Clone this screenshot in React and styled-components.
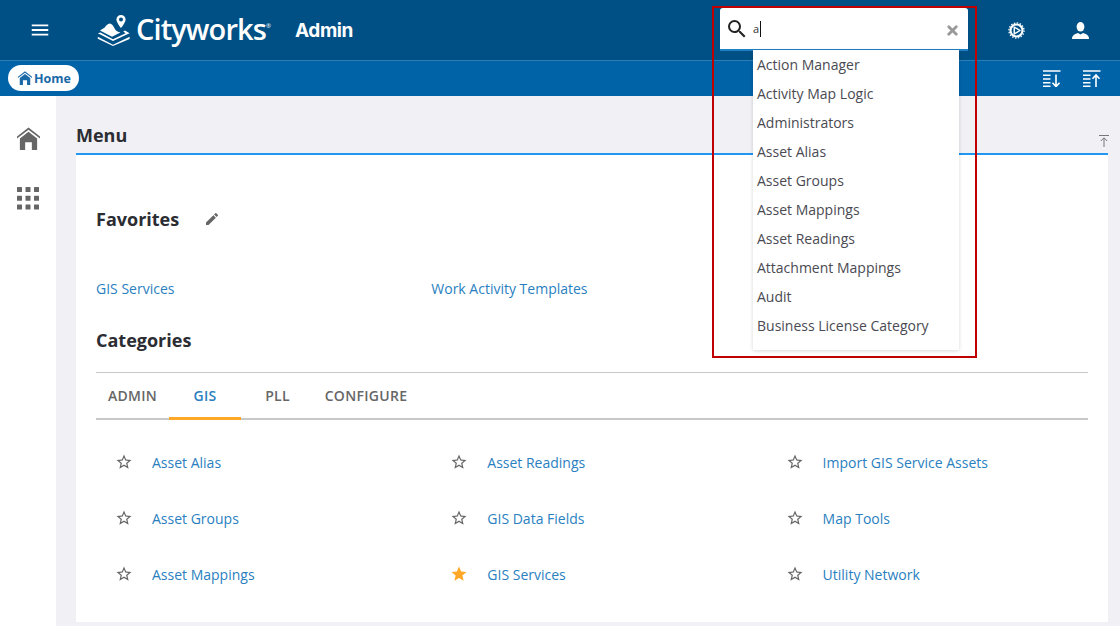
import React from 'react';
import styled, { createGlobalStyle } from 'styled-components';
import { X } from 'lucide-react';
import { MdEdit, MdStar, MdStarBorder, MdMenu, MdSearch } from 'react-icons/md';

const GlobalStyle = createGlobalStyle`
  html, body { margin: 0; padding: 0; height: 100%; overflow: hidden; }
  body { font-family: "Open Sans", "Liberation Sans", sans-serif; background: #f0f0f5; }
  * { box-sizing: border-box; }
`;

const Page = styled.div`
  position: relative;
  width: 1120px;
  height: 626px;
  overflow: hidden;
  display: flex;
  flex-direction: column;
`;

const TopBar = styled.header`
  height: 61px;
  flex: none;
  display: flex;
  align-items: center;
  padding-right: 8px;
  background: #005085;
  border-bottom: 1px solid #2b7db5;
  color: #fff;
`;

const MenuButton = styled.div`
  width: 80px;
  display: flex;
  justify-content: center;
  color: #fff;
`;

const Logo = styled.div`
  display: flex;
  align-items: center;
  margin-left: 17px;
`;

const LogoText = styled.span`
  font-family: "Open Sans", "Liberation Sans", sans-serif;
  font-size: 29px;
  font-weight: 600;
  letter-spacing: -0.9px;
  margin: -3px 0 0 6px;
  line-height: 40px;
`;

const Trademark = styled.sup`
  font-size: 6px;
  align-self: flex-start;
  margin-top: 10px;
`;

const AppName = styled.span`
  font-family: Inter, "Open Sans", sans-serif;
  font-size: 19px;
  font-weight: 700;
  margin-left: 24px;
  letter-spacing: -0.4px;
`;

const SearchWrap = styled.div`
  position: relative;
  width: 248px;
  height: 43px;
  align-self: flex-start;
  margin-top: 8px;
  margin-left: auto;
  margin-right: 16px;
  display: flex;
  align-items: center;
  background: #fff;
  border-radius: 3px 3px 0 0;
  border-bottom: 2px solid #1f7fc4;
  color: #222;
`;

const SearchIcon = styled(MdSearch)`
  margin-left: 5px;
  flex: none;
`;

const SearchValue = styled.span`
  font-size: 11px;
  line-height: 16px;
  margin-left: 4px;
  color: #333;
  border-right: 1px solid #111;
  padding-right: 1px;
`;

const ClearIcon = styled(X)`
  position: absolute;
  right: 8px;
  top: 15px;
  color: #999;
`;

const Dropdown = styled.ul`
  position: absolute;
  z-index: 5;
  top: 42px;
  left: 33px;
  width: 206px;
  height: 300px;
  margin: 0;
  padding: 0;
  list-style: none;
  background: #fff;
  box-shadow: 0 1px 4px rgba(0, 0, 0, 0.16);
`;

const DropdownItem = styled.li`
  height: 29px;
  padding-left: 4px;
  font-size: 14px;
  line-height: 29px;
  color: #4a4a52;
`;

const HeaderIcon = styled.div`
  width: 64px;
  display: flex;
  justify-content: center;
  color: #fff;
`;

const SubBar = styled.div`
  height: 35px;
  flex: none;
  display: flex;
  align-items: center;
  padding: 0 19px 0 8px;
  background: #0063a8;
  color: #fff;
`;

const HomePill = styled.div`
  display: flex;
  align-items: center;
  gap: 2px;
  height: 26px;
  padding: 0 8px 0 10px;
  border-radius: 13px;
  background: #fff;
  color: #1a6aa8;
  font-size: 12.5px;
  font-weight: 700;
  margin-top: -1px;
`;

const SubActions = styled.div`
  margin-left: auto;
  display: flex;
  gap: 22px;
`;

const Body = styled.div`
  flex: 1;
  display: flex;
  min-height: 0;
`;

const SideRail = styled.nav`
  width: 56px;
  flex: none;
  background: #fff;
  display: flex;
  flex-direction: column;
  align-items: center;
  padding-top: 31px;
  gap: 37px;
  color: #666;
`;

const Main = styled.main`
  flex: 1;
  padding: 0 12px 4px 20px;
  display: flex;
  flex-direction: column;
  min-width: 0;
`;

const MenuHead = styled.div`
  position: relative;
  height: 59px;
  flex: none;
  display: flex;
  align-items: center;
  padding-top: 21px;
  border-bottom: 2px solid #2196f3;
  font-size: 18px;
  font-weight: 700;
  color: #2b2d33;
`;

const CollapseIcon = styled.svg`
  position: absolute;
  right: -1px;
  bottom: 6px;
`;

const Card = styled.section`
  flex: 1;
  background: #fff;
  padding: 50px 20px 0;
  min-height: 0;
`;

const SectionTitle = styled.h2`
  display: flex;
  align-items: center;
  margin: 0;
  height: 28px;
  font-size: 18px;
  font-weight: 700;
  color: #2b2d33;
`;

const EditIcon = styled(MdEdit)`
  margin-left: 25px;
  color: #666;
`;

const FavoriteRow = styled.div`
  display: grid;
  grid-template-columns: repeat(3, 335.3px);
  margin-top: 44px;
  height: 24px;
  align-items: center;
`;

const LinkText = styled.a`
  font-size: 14px;
  line-height: 20px;
  color: #2a7fc0;
`;

const CategoriesTitle = styled(SectionTitle)`
  margin-top: 25px;
`;

const Tabs = styled.div`
  display: flex;
  margin-top: 18px;
  height: 48px;
  border-top: 1px solid #c8c8c8;
  border-bottom: 2px solid #c8c8c8;
`;

const Tab = styled.div`
  width: ${(p) => p.$width}px;
  height: 47px;
  display: flex;
  align-items: center;
  justify-content: center;
  font-size: 14px;
  font-weight: 600;
  letter-spacing: 0.3px;
  color: ${(p) => (p.$active ? '#2a7fc0' : '#666')};
  border-bottom: ${(p) => (p.$active ? '3px solid #ffa726' : '3px solid transparent')};
  padding-top: 1px;
`;

const LinkGrid = styled.div`
  display: grid;
  grid-template-columns: repeat(3, 335.3px);
  grid-auto-rows: 56px;
  padding-top: 15px;
`;

const LinkCell = styled.div`
  display: flex;
  align-items: center;
  padding-left: 19px;
`;

const StarSlot = styled.span`
  width: 37px;
  flex: none;
  display: flex;
  margin-top: -2px;
  color: ${(p) => (p.$on ? '#ffa726' : '#666')};
`;

const Highlight = styled.div`
  position: absolute;
  z-index: 10;
  left: 712px;
  top: 6px;
  width: 265px;
  height: 352px;
  border: 2px solid #c00000;
  pointer-events: none;
`;

const suggestions = [
  'Action Manager',
  'Activity Map Logic',
  'Administrators',
  'Asset Alias',
  'Asset Groups',
  'Asset Mappings',
  'Asset Readings',
  'Attachment Mappings',
  'Audit',
  'Business License Category',
];

const tabs = [
  { label: 'ADMIN', width: 73 },
  { label: 'GIS', width: 72, active: true },
  { label: 'PLL', width: 73 },
  { label: 'CONFIGURE', width: 104 },
];

const links = [
  { label: 'Asset Alias' },
  { label: 'Asset Readings' },
  { label: 'Import GIS Service Assets' },
  { label: 'Asset Groups' },
  { label: 'GIS Data Fields' },
  { label: 'Map Tools' },
  { label: 'Asset Mappings' },
  { label: 'GIS Services', favorite: true },
  { label: 'Utility Network' },
];

function CityworksMark() {
  return (
    <svg width="33" height="31" viewBox="0 0 33 31" fill="#fff">
      <path fillRule="evenodd" d="M24 0a4.600 4.600 0 0 0-4.600 4.600c0 3 4.600 8.600 4.600 8.600s4.600-5.600 4.600-8.600A4.600 4.600 0 0 0 24 0zm0 2.600a2 2 0 1 1 0 4 2 2 0 0 1 0-4z" />
      <path d="M13 8.400c-2.400.3-4.400 2.400-5.200 4.200L3 15.600l12 6.200 8.400-4.400c-2-.4-4-1-5-2.600-1.200-2-2-5-5.400-6.400z" />
      <path d="M.8 18.200l15.200 7.800 16.600-7.800-4.600-2.600-1.800 1 2.400 1.600-12.600 6-12.600-6.600z" />
      <path d="M.8 21.800l15.200 8 16.600-8v2.200l-16.600 7-15.200-7.200z" />
    </svg>
  );
}

function SettingsPlayIcon() {
  return (
    <svg width="17" height="17" viewBox="0 0 18 18" fill="none">
      <circle cx="9" cy="9" r="6.300" stroke="#fff" strokeWidth="2.200" />
      <circle cx="9" cy="9" r="8" stroke="#fff" strokeWidth="1.400" strokeDasharray="1.6 1.54" />
      <path d="M6.600 5.400 L12.800 9 L6.600 12.600 Z" fill="#005085" stroke="#fff" strokeWidth="1.500" strokeLinejoin="round" />
    </svg>
  );
}

function UserIcon() {
  return (
    <svg width="17" height="17" viewBox="0 0 17 17" fill="#fff">
      <ellipse cx="8.500" cy="4.800" rx="3.900" ry="4.800" />
      <path d="M0 17 C0 13.500 2 12.300 6 11 L8.500 12.500 L11 11 C15 12.300 17 13.500 17 17 Z" />
    </svg>
  );
}

function SortIcon({ up }) {
  return (
    <svg width="18" height="17" viewBox="0 0 18 17" fill="none" stroke="#fff" strokeWidth="1.600">
      <path d="M0 1h17.500M0 5.300h7.500M0 9h7.500M0 12.700h7.500M0 16.300h7.500" />
      {up ? <path d="M13 17V5M9.500 8.800l3.500-3.800 3.500 3.800" /> : <path d="M13 4.500v12M9.500 12.800l3.500 3.800 3.500-3.800" />}
    </svg>
  );
}

function HomeGlyph({ size }) {
  return (
    <svg width={size} height={size} viewBox="0 0 24 24" fill="currentColor">
      <path d="M0 10 L12 .5 L24 10 V12 L12 2.800 L0 12 Z" />
      <path d="M3 12 L12 5 L21 12 V24 H15.500 V16 H8.500 V24 H3 Z" />
    </svg>
  );
}

function GridIcon() {
  return (
    <svg width="22" height="23" viewBox="0 0 22 23" fill="currentColor">
      {[0, 8.7, 17.4].flatMap((y) =>
        [0, 8.5, 17].map((x) => <rect key={`${x}-${y}`} x={x} y={y} width="5" height="5" rx="0.5" />)
      )}
    </svg>
  );
}

export default function App() {
  return (
    <Page>
      <GlobalStyle />
      <TopBar>
        <MenuButton>
          <MdMenu size={22} />
        </MenuButton>
        <Logo>
          <CityworksMark />
          <LogoText>Cityworks</LogoText>
          <Trademark>®</Trademark>
        </Logo>
        <AppName>Admin</AppName>
        <SearchWrap>
          <SearchIcon size={24} />
          <SearchValue>a</SearchValue>
          <ClearIcon size={15} strokeWidth={4.5} />
          <Dropdown>
            {suggestions.map((item) => (
              <DropdownItem key={item}>{item}</DropdownItem>
            ))}
          </Dropdown>
        </SearchWrap>
        <HeaderIcon>
          <SettingsPlayIcon />
        </HeaderIcon>
        <HeaderIcon>
          <UserIcon />
        </HeaderIcon>
      </TopBar>
      <SubBar>
        <HomePill>
          <HomeGlyph size={14} />
          Home
        </HomePill>
        <SubActions>
          <SortIcon />
          <SortIcon up />
        </SubActions>
      </SubBar>
      <Body>
        <SideRail>
          <HomeGlyph size={23} />
          <GridIcon />
        </SideRail>
        <Main>
          <MenuHead>
            Menu
            <CollapseIcon width="10" height="12" viewBox="0 0 10 12" fill="none" stroke="#777" strokeWidth="1">
              <path d="M0 .5h10M5 12V3M1.800 6L5 2.800 8.200 6" />
            </CollapseIcon>
          </MenuHead>
          <Card>
            <SectionTitle>
              Favorites
              <EditIcon size={16} />
            </SectionTitle>
            <FavoriteRow>
              <LinkText>GIS Services</LinkText>
              <LinkText>Work Activity Templates</LinkText>
            </FavoriteRow>
            <CategoriesTitle>Categories</CategoriesTitle>
            <Tabs>
              {tabs.map((tab) => (
                <Tab key={tab.label} $width={tab.width} $active={tab.active}>
                  {tab.label}
                </Tab>
              ))}
            </Tabs>
            <LinkGrid>
              {links.map((link) => (
                <LinkCell key={link.label}>
                  <StarSlot $on={link.favorite}>
                    {link.favorite ? <MdStar size={18} /> : <MdStarBorder size={18} />}
                  </StarSlot>
                  <LinkText>{link.label}</LinkText>
                </LinkCell>
              ))}
            </LinkGrid>
          </Card>
        </Main>
      </Body>
      <Highlight />
    </Page>
  );
}
